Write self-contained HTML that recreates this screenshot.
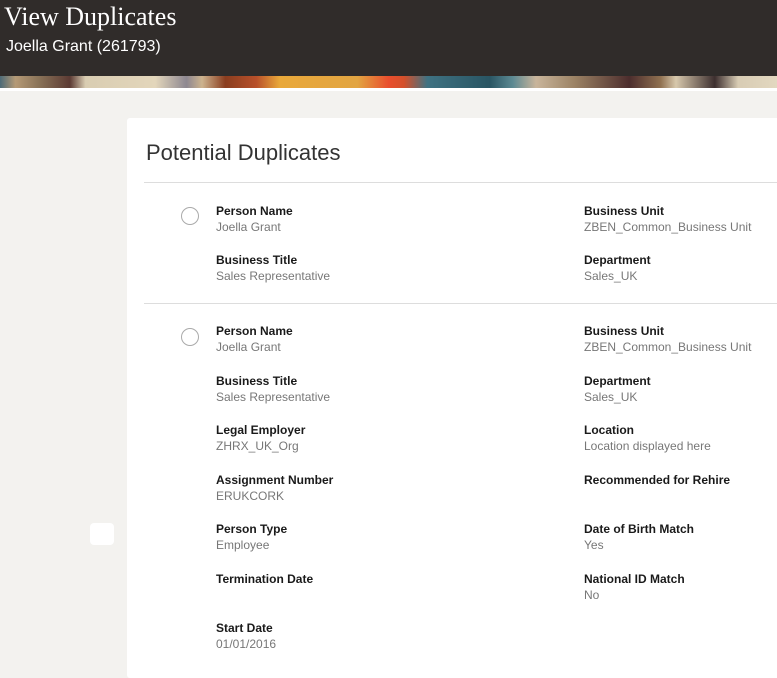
<!DOCTYPE html>
<html><head><meta charset="utf-8"><style>
*{margin:0;padding:0;box-sizing:border-box}
body{width:777px;height:664px;overflow:hidden;background:#f3f2ef;font-family:"Liberation Sans",sans-serif;position:relative}
.hdr{position:absolute;left:0;top:0;width:777px;height:76px;background:#302c2a;color:#fff}
.hdr h1{position:absolute;left:4px;top:2px;font-family:"Liberation Serif",serif;font-weight:normal;font-size:26px}
.hdr .sub{position:absolute;left:6px;top:38px;font-size:16px}
.band{position:absolute;left:0;top:76px;width:777px;height:12px;background:linear-gradient(90deg,#4d6a77 0,#b59a76 2%,#8a7358 5%,#5b3a33 9%,#d9cdb2 11%,#e3d6bb 20%,#8d8790 24%,#cdb38e 26%,#8a3d1f 29%,#b8502a 33%,#e9a83a 36%,#e2a542 46%,#e94e2d 50%,#d4502b 52%,#3f7282 55%,#295563 63%,#5d8a93 66%,#c9b59b 69%,#9b8264 74%,#4c2d2d 81%,#8f7050 85%,#d7c8ac 87%,#3d2f2f 92%,#d8ccb4 95%,#e3d8c0 100%)}
.white{position:absolute;left:0;top:88px;width:777px;height:3px;background:#fff}
.card{position:absolute;left:127px;top:118px;width:660px;height:560px;background:#fff;border-radius:3px}
.card h2{position:absolute;left:19px;top:22px;font-weight:normal;font-size:22px;color:#333}
.hr{position:absolute;left:17px;width:650px;height:1px;background:#ddd}
.f{position:absolute;font-size:12px;line-height:16px}
.f b{display:block;color:#1a1a1a;font-weight:bold;font-size:12px}
.f span{display:block;color:#777;font-size:12px}
.r{position:absolute;left:54px;width:18px;height:18px;border:1px solid #aaa;border-radius:50%}
</style></head><body>
<div class="hdr"><h1>View Duplicates</h1><div class="sub">Joella Grant (261793)</div></div>
<div class="band"></div><div class="white"></div>
<div class="card">
<h2>Potential Duplicates</h2>
<div class="hr" style="top:64px"></div>
<div class="r" style="top:89px"></div>
<div class="f" style="left:89px;top:85px"><b>Person Name</b><span>Joella Grant</span></div>
<div class="f" style="left:457px;top:85px"><b>Business Unit</b><span>ZBEN_Common_Business Unit</span></div>
<div class="f" style="left:89px;top:134px"><b>Business Title</b><span>Sales Representative</span></div>
<div class="f" style="left:457px;top:134px"><b>Department</b><span>Sales_UK</span></div>
<div class="hr" style="top:185px"></div>
<div class="r" style="top:210px"></div>
<div class="f" style="left:89px;top:205px"><b>Person Name</b><span>Joella Grant</span></div>
<div class="f" style="left:457px;top:205px"><b>Business Unit</b><span>ZBEN_Common_Business Unit</span></div>
<div class="f" style="left:89px;top:255px"><b>Business Title</b><span>Sales Representative</span></div>
<div class="f" style="left:457px;top:255px"><b>Department</b><span>Sales_UK</span></div>
<div class="f" style="left:89px;top:304px"><b>Legal Employer</b><span>ZHRX_UK_Org</span></div>
<div class="f" style="left:457px;top:304px"><b>Location</b><span>Location displayed here</span></div>
<div class="f" style="left:89px;top:354px"><b>Assignment Number</b><span>ERUKCORK</span></div>
<div class="f" style="left:457px;top:354px"><b>Recommended for Rehire</b></div>
<div class="f" style="left:89px;top:403px"><b>Person Type</b><span>Employee</span></div>
<div class="f" style="left:457px;top:403px"><b>Date of Birth Match</b><span>Yes</span></div>
<div class="f" style="left:89px;top:453px"><b>Termination Date</b></div>
<div class="f" style="left:457px;top:453px"><b>National ID Match</b><span>No</span></div>
<div class="f" style="left:89px;top:502px"><b>Start Date</b><span>01/01/2016</span></div>
</div>
<div style="position:absolute;left:90px;top:523px;width:24px;height:22px;background:#fff;border-radius:4px"></div>
</body></html>
